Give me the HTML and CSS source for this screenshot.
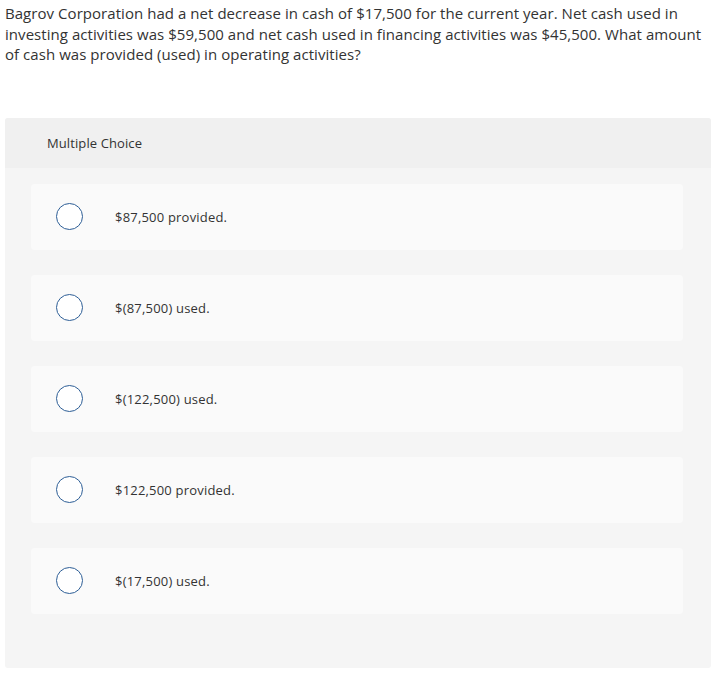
FILE: index.html
```html
<!DOCTYPE html>
<html lang="en">
<head>
<meta charset="utf-8">
<title>Multiple Choice</title>
<link rel="stylesheet" href="styles.css">
</head>
<body>
<p class="question">Bagrov Corporation had a net decrease in cash of $17,500 for the current year. Net cash used in investing activities was $59,500 and net cash used in financing activities was $45,500. What amount of cash was provided (used) in operating activities?</p>
<section class="panel">
  <div class="panel-head">Multiple Choice</div>
  <div class="options">
    <label class="option"><span class="radio"></span><span class="label">$87,500 provided.</span></label>
    <label class="option"><span class="radio"></span><span class="label">$(87,500) used.</span></label>
    <label class="option"><span class="radio"></span><span class="label">$(122,500) used.</span></label>
    <label class="option"><span class="radio"></span><span class="label">$122,500 provided.</span></label>
    <label class="option"><span class="radio"></span><span class="label">$(17,500) used.</span></label>
  </div>
</section>
</body>
</html>
```
FILE: styles.css
```css
html, body {
  margin: 0;
  padding: 0;
  background: #ffffff;
}
body {
  font-family: "Open Sans", "Liberation Sans", sans-serif;
  color: #333333;
}
.question {
  margin: 0;
  padding: 3px 8px 0 5px;
  font-size: 15px;
  line-height: 20.5px;
  letter-spacing: 0.05px;
  color: #333333;
}
.panel {
  margin: 53px 14px 0 5px;
  background: #f5f5f5;
  border-radius: 3px;
  padding-bottom: 54px;
}
.panel-head {
  height: 50px;
  background: #f0f0f0;
  border-radius: 3px 3px 0 0;
  display: flex;
  align-items: center;
  padding-left: 42px;
  font-size: 13px;
  letter-spacing: 0.1px;
  color: #333333;
}
.options {
  padding: 16px 28px 0 26px;
  display: flex;
  flex-direction: column;
  gap: 25px;
}
.option {
  height: 66px;
  background: #fafafa;
  border-radius: 4px;
  display: flex;
  align-items: center;
  padding-left: 25px;
}
.radio {
  width: 25px;
  height: 25px;
  border: 1.3px solid #2d5e96;
  border-radius: 50%;
  background: #ffffff;
  flex: none;
}
.label {
  margin-left: 32px;
  font-size: 13px;
  letter-spacing: 0.2px;
  color: #333333;
}
```
